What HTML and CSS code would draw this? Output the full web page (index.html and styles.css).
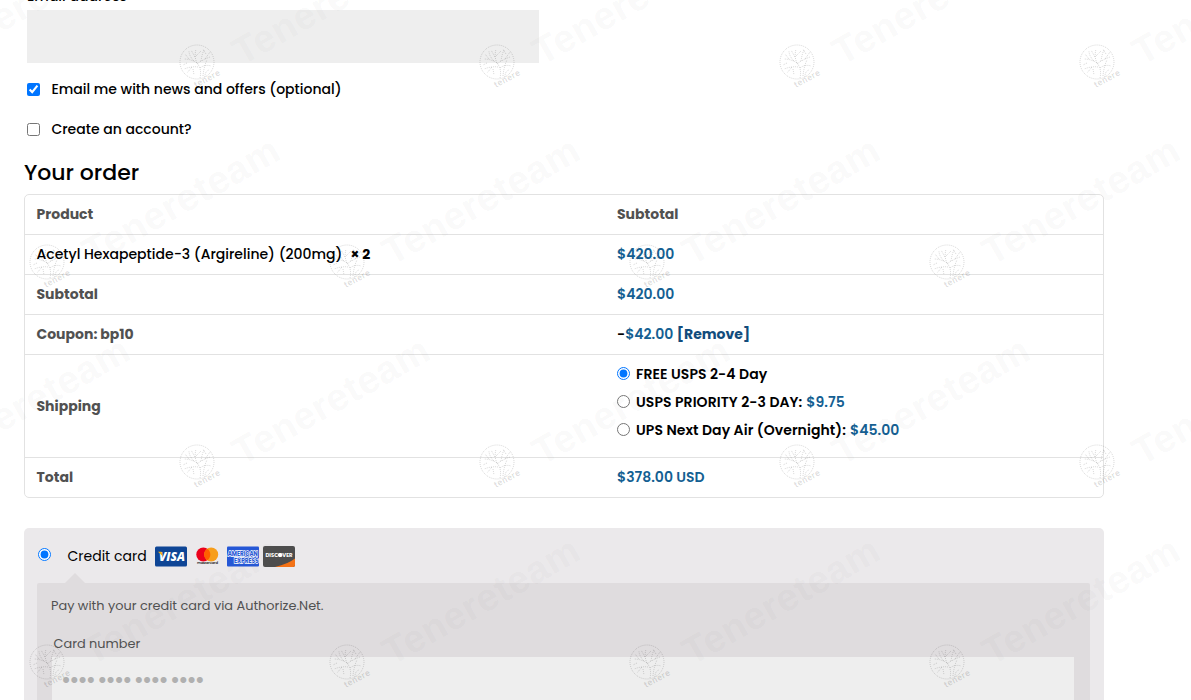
FILE: index.html
```
<!DOCTYPE html>
<html lang="en">
<head>
    <meta charset="UTF-8">
    <meta name="viewport" content="width=device-width, initial-scale=1.0">
    <title>Checkout</title>
    <link rel="stylesheet" href="styles.css">
</head>
<body>

<form class="checkout">
    <div class="billing">
        <label class="field-label" for="email">Email address</label>
        <input type="email" id="email" class="field">
        <label class="check"><input type="checkbox" checked><span>Email me with news and offers (optional)</span></label>
        <label class="check"><input type="checkbox"><span>Create an account?</span></label>
    </div>

    <h3>Your order</h3>

    <div class="order">
        <div class="row"><b>Product</b><b>Subtotal</b></div>
        <div class="row"><div class="item"><span>Acetyl Hexapeptide-3 (Argireline) (200mg)</span><strong>× 2</strong></div><span class="price">$420.00</span></div>
        <div class="row"><b>Subtotal</b><span class="price">$420.00</span></div>
        <div class="row"><b>Coupon: bp10</b><div class="discount"><span class="minus">-</span><span class="price">$42.00</span><a class="remove">[Remove]</a></div></div>
        <div class="row shipping">
            <b>Shipping</b>
            <div class="methods">
                <label><input type="radio" name="ship" checked><span>FREE USPS 2-4 Day</span></label>
                <label><input type="radio" name="ship"><span>USPS PRIORITY 2-3 DAY:</span><span class="price">$9.75</span></label>
                <label><input type="radio" name="ship"><span>UPS Next Day Air (Overnight):</span><span class="price">$45.00</span></label>
            </div>
        </div>
        <div class="row"><b>Total</b><span class="price">$378.00 USD</span></div>
    </div>

    <div class="payment">
        <label class="method">
            <input type="radio" name="pay" checked>
            <span class="method-name">Credit card</span>
            <svg class="card" viewBox="0 0 32 21">
                <rect width="32" height="20" y=".5" rx="1.5" fill="#0e4595"/>
                <text x="4" y="14.8" textLength="26" lengthAdjust="spacingAndGlyphs" font-family="Open Sans" font-size="12" font-weight="800" font-style="italic" fill="#fff">VISA</text>
                <path d="M3 5.8h3.5l1.3 4.5z" fill="#f2ae14"/>
            </svg>
            <svg class="card" viewBox="0 0 32 21">
                <circle cx="12.3" cy="8.5" r="7" fill="#eb001b"/>
                <circle cx="20.2" cy="8.5" r="7" fill="#f79e1b"/>
                <path d="M16.25 2.7a7 7 0 0 1 0 11.6a7 7 0 0 1 0-11.6z" fill="#ff5f00"/>
                <text x="6" y="18.3" textLength="21" font-size="3.8" font-weight="600" fill="#333">mastercard</text>
            </svg>
            <svg class="card" viewBox="0 0 32 21">
                <rect width="32" height="20" y=".5" rx="1" fill="#2557d6"/>
                <g font-size="7" font-weight="700" fill="#2557d6" stroke="#fff" stroke-width="1.3" paint-order="stroke">
                    <text x=".7" y="9.5" textLength="30" lengthAdjust="spacingAndGlyphs">AMERICAN</text>
                    <text x="7" y="16.5" textLength="24.5" lengthAdjust="spacingAndGlyphs">EXPRESS</text>
                </g>
            </svg>
            <svg class="card" viewBox="0 0 32 21">
                <rect width="32" height="21" rx="2" fill="#4d4d4d"/>
                <path d="M12 21Q25 18 32 12.5V19a2 2 0 0 1-2 2z" fill="#f47216"/>
                <text x="2.5" y="11" textLength="27" lengthAdjust="spacingAndGlyphs" font-size="5.6" font-weight="700" fill="#fff">DISCOVER</text>
                <circle cx="17" cy="9" r="2.1" fill="#fff"/>
            </svg>
        </label>
        <div class="payment-box">
            <p class="pay-note">Pay with your credit card via Authorize.Net.</p>
            <label class="card-label" for="card-number">Card number</label>
            <input type="text" id="card-number" class="card-number" placeholder="•••• •••• •••• ••••">
        </div>
    </div>
</form>

<svg class="watermark" width="1191" height="700">
    <defs>
        <g id="mark">
            <g fill="none" stroke="#000" stroke-opacity=".2" stroke-width=".8" stroke-dasharray="1 1">
                <circle r="17"/>
                <path d="M3 16Q5 7 0 1Q-3-5-1-13M0 1Q-6-3-13-3M-3-1Q-8-6-8-11M-8-3l-4-5M0 2Q5-2 13-5M4-1Q5-8 7-12M8-3l5-7M1 5Q-5 4-13 7M-5 5l-5 6M3 6Q8 2 14 4M8 15Q8 9 12 8M6 14Q7 4 10-2M-1-6l5-5M-2-5l-4-7M-10 1l-4 2M9-8l-3-5M-4 7l1 6"/>
            </g>
            <text class="mark-small" transform="translate(-1 26) rotate(-28)">tenere</text>
            <text class="mark-big" transform="translate(45 4) rotate(-29.5)" textLength="219">Tenereteam</text>
        </g>
    </defs>
    <use href="#mark" x="-103" y="62"/>
    <use href="#mark" x="197" y="62"/>
    <use href="#mark" x="497" y="62"/>
    <use href="#mark" x="797" y="62"/>
    <use href="#mark" x="1097" y="62"/>
    <use href="#mark" x="47" y="262"/>
    <use href="#mark" x="347" y="262"/>
    <use href="#mark" x="647" y="262"/>
    <use href="#mark" x="947" y="262"/>
    <use href="#mark" x="-103" y="462"/>
    <use href="#mark" x="197" y="462"/>
    <use href="#mark" x="497" y="462"/>
    <use href="#mark" x="797" y="462"/>
    <use href="#mark" x="1097" y="462"/>
    <use href="#mark" x="47" y="662"/>
    <use href="#mark" x="347" y="662"/>
    <use href="#mark" x="647" y="662"/>
    <use href="#mark" x="947" y="662"/>
</svg>

</body>
</html>
```
FILE: styles.css
```
* {
    box-sizing: border-box;
    margin: 0;
    padding: 0;
}
body {
    height: 700px;
    overflow: hidden;
    background: #fff;
    color: #000;
    font-family: Poppins, Inter, sans-serif;
    font-size: 14px;
    font-weight: 500;
}
input[type="checkbox"],
input[type="radio"] {
    width: 13px;
    height: 13px;
    flex: none;
}
.checkout {
    width: 1080px;
    height: 700px;
    margin-left: 24px;
    overflow: hidden;
}
.billing {
    padding-left: 3px;
}
.field-label {
    display: block;
    height: 20px;
    margin-top: -10px;
    line-height: 13px;
}
.field {
    display: block;
    width: 512px;
    height: 53px;
    margin-bottom: 6px;
    border: none;
    background: #eee;
}
.check {
    display: flex;
    align-items: center;
    gap: 11.4px;
    height: 40px;
}
h3 {
    height: 45px;
    line-height: 48px;
    font-size: 22px;
    font-weight: 500;
}
.order {
    border: 1px solid #e2e2e2;
    border-radius: 5px;
}
.row {
    display: grid;
    grid-template-columns: 580.5px 1fr;
    align-items: center;
    height: 40px;
    padding-left: 11.5px;
    border-bottom: 1px solid #e2e2e2;
}
.row:last-child {
    height: 39px;
    border-bottom: none;
}
.row b {
    color: #515151;
    font-weight: 700;
}
.item {
    display: flex;
    gap: 8px;
}
.price {
    color: #145f92;
    font-weight: 600;
}
.minus {
    font-weight: 600;
}
.remove {
    margin-left: 3.5px;
    color: #124c7c;
    font-weight: 700;
}
.shipping {
    height: 103px;
}
.methods {
    display: flex;
    flex-direction: column;
    height: 93px;
    font-weight: 600;
    letter-spacing: .07px;
}
.methods label {
    display: flex;
    align-items: center;
    height: 28px;
}
.methods input {
    margin-right: 6px;
}
.methods span {
    padding-top: 1px;
}
.methods .price {
    margin-left: 4px;
}
.payment {
    height: 260px;
    margin-top: 30px;
    padding: 14px 14px 0 13px;
    border-radius: 5px;
    background: #ebe9eb;
}
.method {
    display: flex;
    align-items: center;
    height: 27px;
    padding: 1px 0 0 1px;
    font-weight: 400;
}
.method input {
    margin-bottom: 3px;
}
.method-name {
    width: 80px;
    margin: 0 7.5px 0 16.5px;
    white-space: nowrap;
}
.card {
    width: 32px;
    height: 21px;
    margin-right: 4px;
}
.payment-box {
    position: relative;
    height: 240px;
    margin-top: 14px;
    padding: 12px 15px 0 14px;
    border-radius: 2px;
    background: #dfdcde;
    color: #515151;
    font-size: 12.88px;
    font-weight: 400;
}
.payment-box::before {
    content: "";
    position: absolute;
    top: -10px;
    left: 28px;
    border: 10px solid transparent;
    border-top: none;
    border-bottom-color: #dfdcde;
}
.pay-note {
    height: 38px;
    line-height: 21px;
}
.card-label {
    display: block;
    height: 24px;
    padding-left: 2.5px;
    line-height: 21px;
}
.card-number {
    display: block;
    width: 1022px;
    height: 53px;
    margin-left: 1px;
    padding: 0 9px 9px;
    border: none;
    background: #eee;
    font: 500 19px Inter, sans-serif;
    letter-spacing: -1.85px;
}
.card-number::placeholder {
    color: #b0b0b0;
}
.watermark {
    position: absolute;
    top: 0;
    left: 0;
    pointer-events: none;
}
.mark-small {
    font: 500 9px Roboto, sans-serif;
    letter-spacing: .5px;
    fill: #000;
    fill-opacity: .15;
}
.mark-big {
    font: 700 38.5px "Liberation Sans", sans-serif;
    fill: #777;
    fill-opacity: .05;
}
```
